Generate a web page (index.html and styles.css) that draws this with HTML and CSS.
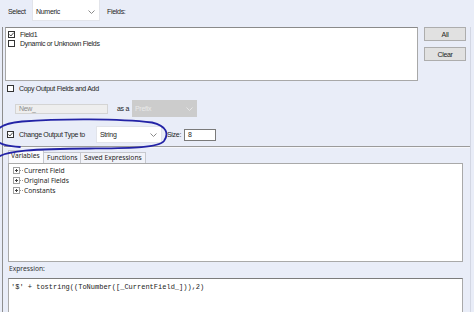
FILE: index.html
```html
<!DOCTYPE html>
<html lang="en">
<head>
    <meta charset="UTF-8">
    <meta name="viewport" content="width=device-width, initial-scale=1.0">
    <title>Formula</title>
    <link rel="stylesheet" href="styles.css">
</head>
<body>
    <div class="top-row">
        <span class="lbl select-lbl">Select</span>
        <div class="combo combo-type">
            <span>Numeric</span>
            <svg class="chev" width="7" height="4" viewBox="0 0 7 4"><path d="M0.5 0.5 L3.5 3.5 L6.5 0.5" fill="none" stroke="#8a8a8a"/></svg>
        </div>
        <span class="lbl fields-lbl">Fields:</span>
    </div>

    <div class="panel">
        <div class="fields-row">
            <div class="listbox">
                <div class="check-item">
                    <span class="cb"><svg width="5" height="5" viewBox="0 0 5 5"><path d="M0.3 2.4 L1.9 4 L4.8 0.6" fill="none" stroke="#333" stroke-width="0.9"/></svg></span>
                    Field1
                </div>
                <div class="check-item">
                    <span class="cb"></span>
                    Dynamic or Unknown Fields
                </div>
            </div>
            <div class="btn-col">
                <button class="btn">All</button>
                <button class="btn">Clear</button>
            </div>
        </div>

        <div class="opt-row copy-row">
            <span class="cb"></span>
            Copy Output Fields and Add
        </div>

        <div class="opt-row prefix-row">
            <div class="textbox new-box">New_</div>
            <span class="as-a">as a</span>
            <div class="combo combo-prefix">
                <span>Prefix</span>
                <svg class="chev" width="7" height="4" viewBox="0 0 7 4"><path d="M0.5 0.5 L3.5 3.5 L6.5 0.5" fill="none" stroke="#e6e6e6"/></svg>
            </div>
        </div>

        <div class="opt-row type-row">
            <span class="cb"><svg width="5" height="5" viewBox="0 0 5 5"><path d="M0.3 2.4 L1.9 4 L4.8 0.6" fill="none" stroke="#333" stroke-width="0.9"/></svg></span>
            <span class="type-lbl">Change Output Type to</span>
            <div class="combo combo-string">
                <span>String</span>
                <svg class="chev" width="7" height="4" viewBox="0 0 7 4"><path d="M0.5 0.5 L3.5 3.5 L6.5 0.5" fill="none" stroke="#8a8a8a"/></svg>
            </div>
            <span class="size-lbl">Size:</span>
            <div class="textbox size-box">8</div>
        </div>

        <div class="separator"></div>

        <div class="tab-strip">
            <div class="tab active">Variables</div>
            <div class="tab">Functions</div>
            <div class="tab">Saved Expressions</div>
        </div>

        <div class="tree">
            <div class="tree-item">
                <svg class="expander" width="10" height="7" viewBox="0 0 10 7"><rect x="0.5" y="0.5" width="6" height="6" fill="#fff" stroke="#a0a0a0"/><path d="M2 3.5h3M3.5 2v3" stroke="#444"/><path d="M7 3.5h3" stroke="#999" stroke-dasharray="1 1"/></svg>
                Current Field
            </div>
            <div class="tree-item">
                <svg class="expander" width="10" height="7" viewBox="0 0 10 7"><rect x="0.5" y="0.5" width="6" height="6" fill="#fff" stroke="#a0a0a0"/><path d="M2 3.5h3M3.5 2v3" stroke="#444"/><path d="M7 3.5h3" stroke="#999" stroke-dasharray="1 1"/></svg>
                Original Fields
            </div>
            <div class="tree-item">
                <svg class="expander" width="10" height="7" viewBox="0 0 10 7"><rect x="0.5" y="0.5" width="6" height="6" fill="#fff" stroke="#a0a0a0"/><path d="M2 3.5h3M3.5 2v3" stroke="#444"/><path d="M7 3.5h3" stroke="#999" stroke-dasharray="1 1"/></svg>
                Constants
            </div>
        </div>

        <div class="expr-label">Expression:</div>
        <div class="expr-box">'$' + tostring((ToNumber([_CurrentField_])),2)</div>
    </div>

    <!-- hand drawn marker around the output type option -->
    <svg class="annotation" width="474" height="312" viewBox="0 0 474 312">
        <path d="M-2 157 C8 151, 30 149, 90 148.5 C130 148, 158 148, 164 141 C169 134, 167 126, 152 122.5 C120 118.5, 60 118.5, 22 121.5 C8 123, 0 126, -2 130 M-3 141 C2 145, 8 146, 20 147"
              fill="none" stroke="#2323a6" stroke-width="1.8" stroke-linecap="round"/>
    </svg>
</body>
</html>
```

FILE: styles.css
```css
body {
    margin: 0;
    width: 474px;
    height: 312px;
    overflow: hidden;
    position: relative;
    background-color: #e9edf8;
    font-family: "Liberation Sans", Arial, sans-serif;
    font-size: 7px;
    letter-spacing: -0.3px;
    color: #1e1e1e;
}

.top-row {
    height: 27px;
    display: flex;
    align-items: flex-start;
}

.lbl {
    margin-top: 8px;
    line-height: 8px;
}

.select-lbl {
    width: 24px;
    padding-left: 8px;
}

.fields-lbl {
    margin-left: 7px;
}

.combo {
    display: flex;
    align-items: center;
    justify-content: space-between;
    box-sizing: border-box;
    padding: 0 4px 0 3px;
}

.combo-type {
    width: 68px;
    height: 21px;
    background-color: #fff;
    border: 1px solid #e2e4ea;
    border-top: none;
    padding-top: 3px;
}

.panel {
    margin-left: 2px;
    width: 467px;
    height: 285px;
    border-left: 1px solid #8e8e8e;
    border-right: 1px solid #d3d7e3;
}

.fields-row {
    display: flex;
}

.listbox {
    width: 413px;
    height: 54px;
    margin-left: 2px;
    box-sizing: border-box;
    background-color: #fff;
    border: 1px solid #a8a8a8;
    border-top-color: #8a8a8a;
    padding: 2px 1px 2px 2px;
}

.check-item {
    display: flex;
    align-items: center;
    height: 9px;
}

.cb {
    width: 7px;
    height: 7px;
    box-sizing: border-box;
    border: 1px solid #333;
    background-color: #fff;
    margin-right: 5px;
    display: flex;
    align-items: center;
    justify-content: center;
    flex-shrink: 0;
}

.btn-col {
    display: flex;
    flex-direction: column;
    gap: 6px;
    margin-left: 6px;
}

.btn {
    width: 42px;
    height: 14px;
    padding: 0;
    background-color: #e1e1e1;
    border: 1px solid #adadad;
    font-family: inherit;
    font-size: 7px;
    letter-spacing: -0.3px;
    color: #1e1e1e;
}

.opt-row {
    display: flex;
    align-items: center;
    padding-left: 4px;
}

.copy-row {
    margin-top: 3px;
    height: 9px;
}

.prefix-row {
    margin-top: 7px;
    height: 17px;
    padding-left: 12px;
}

.textbox {
    box-sizing: border-box;
    display: flex;
    align-items: center;
    padding-left: 3px;
}

.new-box {
    width: 93px;
    height: 10px;
    background-color: #eeeeee;
    border: 1px solid #d4d4d4;
    color: #8c8c8c;
}

.as-a {
    width: 15px;
    margin-left: 9px;
}

.combo-prefix {
    width: 65px;
    height: 17px;
    background-color: #cccccc;
    color: #e9e9e9;
}

.type-row {
    margin-top: 9px;
    height: 17px;
}

.type-lbl {
    width: 77px;
}

.combo-string {
    width: 66px;
    height: 17px;
    background-color: #fff;
    border: 1px solid #e2e4ea;
}

.size-lbl {
    margin-left: 5px;
    width: 17px;
}

.size-box {
    width: 32px;
    height: 12px;
    background-color: #fff;
    border: 1px solid #7a7a7a;
}

.separator {
    margin: 3px 0 0 1px;
    height: 1px;
    background-color: #9b9b9b;
    border-bottom: 1px solid #f6f7fb;
}

.tab-strip {
    display: flex;
    align-items: flex-end;
    height: 13px;
    margin: 2px 0 0 5px;
    font-family: "Noto Sans", sans-serif;
    font-size: 6.7px;
    letter-spacing: 0;
}

.tab {
    height: 11px;
    line-height: 10px;
    padding: 0 3px;
    box-sizing: border-box;
    background-color: #f1f3f9;
    border: 1px solid #c6c8ce;
    border-bottom: none;
    margin-left: -1px;
}

.tab.active {
    height: 13px;
    width: 36px;
    padding: 0 2px;
    background-color: #fbfbfd;
    margin-left: 0;
}

.tab:nth-child(2) {
    width: 38px;
}

.tree {
    width: 455px;
    height: 99px;
    margin-left: 5px;
    box-sizing: border-box;
    background-color: #fff;
    border: 1px solid #a9a9a9;
    padding: 1px 0 0 4px;
    font-family: "Noto Sans", sans-serif;
    font-size: 6.7px;
    letter-spacing: 0;
}

.tree-item {
    display: flex;
    align-items: center;
    height: 10px;
}

.expander {
    margin-right: 1px;
}

.expr-label {
    margin: 2px 0 0 6px;
    height: 10px;
    line-height: 10px;
    font-family: "Noto Sans", sans-serif;
    font-size: 6.7px;
    letter-spacing: 0;
    color: #333;
}

.expr-box {
    width: 455px;
    height: 40px;
    margin: 4px 0 0 5px;
    box-sizing: border-box;
    background-color: #fff;
    border: 1px solid #a9a9a9;
    border-top-color: #7c7c7c;
    padding: 3px 2px;
    font-family: "Liberation Mono", monospace;
    font-size: 7px;
    letter-spacing: 0;
    line-height: 10px;
    color: #222;
}

.annotation {
    position: absolute;
    top: 0;
    left: 0;
    pointer-events: none;
}
```
